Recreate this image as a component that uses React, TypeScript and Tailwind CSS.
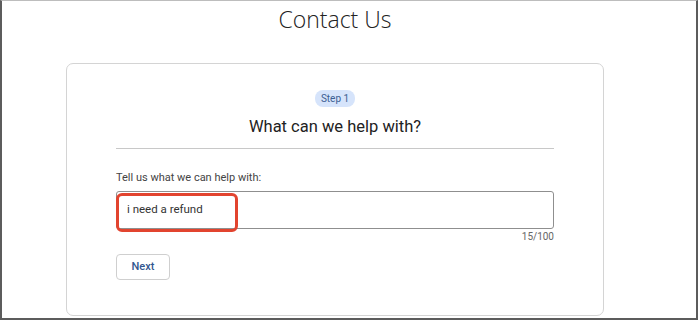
import React from "react";

export default function App() {
  return (
    <div className="w-[698px] h-[320px] overflow-hidden bg-white border-l-2 border-r-2 border-b-2 border-t border-l-[#5c5c5c] border-r-[#5c5c5c] border-b-[#5c5c5c] border-t-[#bdbdbd]" style={{ fontFamily: "Roboto, 'Open Sans', sans-serif" }}>
      <div className="ml-[64px] w-[538px]">
        <h1 className="text-center text-[23px] leading-[28px] pt-[4px] font-light text-[#222]" style={{ fontFamily: "'Open Sans', Roboto, sans-serif" }}>
          Contact Us
        </h1>
        <div className="mt-[30px] h-[253px] rounded-[7px] border border-[#d4d4d4] px-[49px] pt-[26px]">
          <div className="flex flex-col items-center">
            <span className="rounded-[8px] bg-[#d6e4fb] px-[6px] h-[17px] leading-[17px] text-[10px] text-[#3d5f93]">Step 1</span>
            <h2 className="mt-[8px] text-[16.5px] leading-[24px] text-[#222]" style={{ fontFamily: "Roboto, 'Open Sans', sans-serif" }}>
              What can we help with?
            </h2>
          </div>
          <div className="mt-[9px] h-px bg-[#c8c8c8]" />
          <div className="mt-[22px] text-[11px] leading-[14px] text-[#444]">Tell us what we can help with:</div>
          <div className="relative mt-[6px]">
            <div className="h-[38px] rounded-[3px] border border-[#8f8f8f] px-[10px] flex items-center text-[11.5px] text-[#333]">
              i need a refund
            </div>
            <div className="absolute left-[0px] top-[2px] w-[122px] h-[39px] rounded-[6px] border-[3px] border-[#e2442f]" />
          </div>
          <div className="mt-[2px] text-right text-[10px] leading-[12px] text-[#666]">15/100</div>
          <button className="mt-[11px] w-[54px] h-[26px] rounded-[4px] border border-[#cfcfcf] text-[11px] font-medium text-[#33578f] bg-white">
            Next
          </button>
        </div>
      </div>
    </div>
  );
}
